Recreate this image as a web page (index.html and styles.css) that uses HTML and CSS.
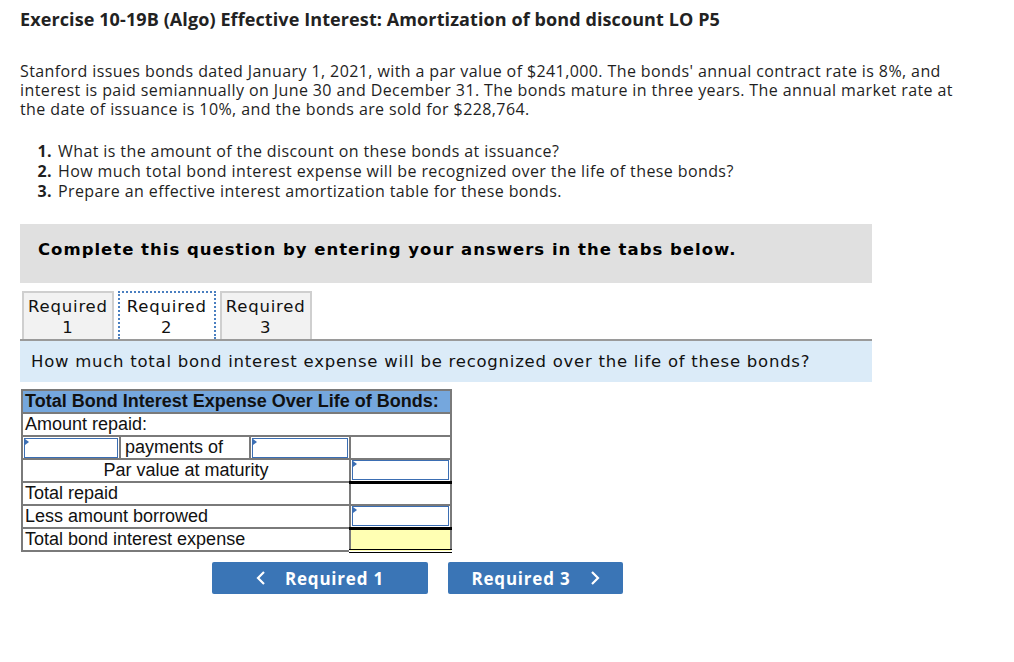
FILE: index.html
```html
<!DOCTYPE html>
<html>
<head>
<meta charset="utf-8">
<link rel="stylesheet" href="styles.css">
</head>
<body>
<div class="page">
  <h1 class="title">Exercise 10-19B (Algo) Effective Interest: Amortization of bond discount LO P5</h1>
  <p class="intro">Stanford issues bonds dated January 1, 2021, with a par value of $241,000. The bonds' annual contract rate is 8%, and interest is paid semiannually on June 30 and December 31. The bonds mature in three years. The annual market rate at the date of issuance is 10%, and the bonds are sold for $228,764.</p>
  <ol class="questions">
    <li><span class="num">1.</span>What is the amount of the discount on these bonds at issuance?</li>
    <li><span class="num">2.</span>How much total bond interest expense will be recognized over the life of these bonds?</li>
    <li><span class="num">3.</span>Prepare an effective interest amortization table for these bonds.</li>
  </ol>
  <div class="panel">
    <div class="instructions">Complete this question by entering your answers in the tabs below.</div>
    <div class="tabs">
      <div class="tab">Required<br>1</div>
      <div class="tab active">Required<br>2</div>
      <div class="tab">Required<br>3</div>
    </div>
    <div class="prompt">How much total bond interest expense will be recognized over the life of these bonds?</div>
    <table class="sheet">
      <colgroup><col class="c1"><col class="c2"><col class="c3"><col class="c4"></colgroup>
      <tr class="head"><td colspan="4">Total Bond Interest Expense Over Life of Bonds:</td></tr>
      <tr><td colspan="4">Amount repaid:</td></tr>
      <tr>
        <td class="inp"><div class="box"></div></td>
        <td class="pay">payments of</td>
        <td class="inp"><div class="box"></div></td>
        <td></td>
      </tr>
      <tr><td colspan="3" class="center">Par value at maturity</td><td class="inp under"><div class="box"></div></td></tr>
      <tr><td colspan="3">Total repaid</td><td></td></tr>
      <tr><td colspan="3">Less amount borrowed</td><td class="inp under"><div class="box"></div></td></tr>
      <tr><td colspan="3">Total bond interest expense</td><td class="result"></td></tr>
    </table>
    <div class="nav">
      <button class="btn prev"><svg width="10" height="16" viewBox="0 0 10 16"><path d="M8 2 L2 8 L8 14" fill="none" stroke="#fff" stroke-width="2.2"/></svg><span>Required 1</span></button>
      <button class="btn next"><span>Required 3</span><svg width="10" height="16" viewBox="0 0 10 16"><path d="M2 2 L8 8 L2 14" fill="none" stroke="#fff" stroke-width="2.2"/></svg></button>
    </div>
  </div>
</div>
</body>
</html>
```

FILE: styles.css
```css
html, body { margin: 0; padding: 0; background: #fff; }
body { font-family: "Open Sans", "Lato", sans-serif; color: #1f1f1f; }
.page { padding: 8px 20px 0 20px; }
.title { font-size: 18px; font-weight: 700; margin: 0; line-height: 22px; letter-spacing: 0.1px; color: #222; }
.intro { font-size: 16px; line-height: 19px; letter-spacing: 0.4px; margin: 32px 0 0 0; width: 945px; }
.questions { list-style: none; margin: 22px 0 0 0; padding: 0 0 0 14px; font-size: 16px; line-height: 20px; letter-spacing: 0.4px; }
.questions li { display: flex; }
.questions .num { font-weight: 700; width: 24px; text-align: right; padding-right: 6px; box-sizing: border-box; }
.panel { width: 852px; margin-top: 23px; }
.instructions { background: #e0e0e0; height: 59px; box-sizing: border-box; padding: 16px 0 0 18px; font-family: "DejaVu Sans", Verdana, sans-serif; font-weight: 700; font-size: 16.5px; letter-spacing: 1px; color: #000; }
.tabs { display: flex; gap: 4px; margin-top: 8px; padding-left: 2px; border-bottom: 2px solid #9a9a9a; }
.tab { background: #f2f2f2; border: 2px solid #cfcfcf; border-bottom: none; font-family: "DejaVu Sans", Verdana, sans-serif; font-size: 16.5px; letter-spacing: 0.8px; line-height: 21px; text-align: center; padding: 3px 4px 1px; color: #111; }
.tab.active { background: #fff; border: 2px dotted #4a7fc0; border-bottom: none; padding: 3px 7px 1px; }
.prompt { background: #dbebf8; height: 41px; box-sizing: border-box; padding: 11px 0 0 11px; font-family: "DejaVu Sans", Verdana, sans-serif; font-size: 16.5px; letter-spacing: 0.75px; color: #111; }
.sheet { border-collapse: collapse; margin: 7px 0 0 1px; font-family: "Liberation Sans", Arial, sans-serif; font-size: 18px; color: #111; table-layout: fixed; width: 431px; }
.sheet col.c1 { width: 98px; }
.sheet col.c2 { width: 130px; }
.sheet col.c3 { width: 100px; }
.sheet col.c4 { width: 101px; }
.sheet tr { height: 23px; }
.sheet td { border: 2px solid #7a7a7a; padding: 0 2px; line-height: 19px; white-space: nowrap; overflow: visible; }
.sheet td.pay { padding-left: 4px; }
.sheet tr.head td { background: #75a7dd; font-weight: 700; }
.sheet td.center { text-align: center; }
.sheet td.inp { padding: 0 1px; }
.box { height: 20px; border: 1px solid #3b6eb3; background: #fff; box-sizing: border-box; position: relative; }
.box::before { content: ""; position: absolute; left: 0; top: 0; border-left: 4px solid #3b6eb3; border-top: 3px solid transparent; border-bottom: 3px solid transparent; }
.sheet td.under { border-bottom: 3px solid #000; }
.sheet td.result { background: #ffffb3; border-bottom: 4px double #000; }
.nav { display: flex; gap: 20px; margin: 9px 0 0 192px; }
.btn { height: 32px; border: none; border-radius: 2px; background: #3a75b6; color: #fff; font-family: "Open Sans", "Lato", sans-serif; font-weight: 700; font-size: 17px; letter-spacing: 0.8px; display: flex; align-items: center; justify-content: center; gap: 19px; padding: 0; }
.btn.prev { width: 216px; }
.btn.next { width: 175px; }
```
